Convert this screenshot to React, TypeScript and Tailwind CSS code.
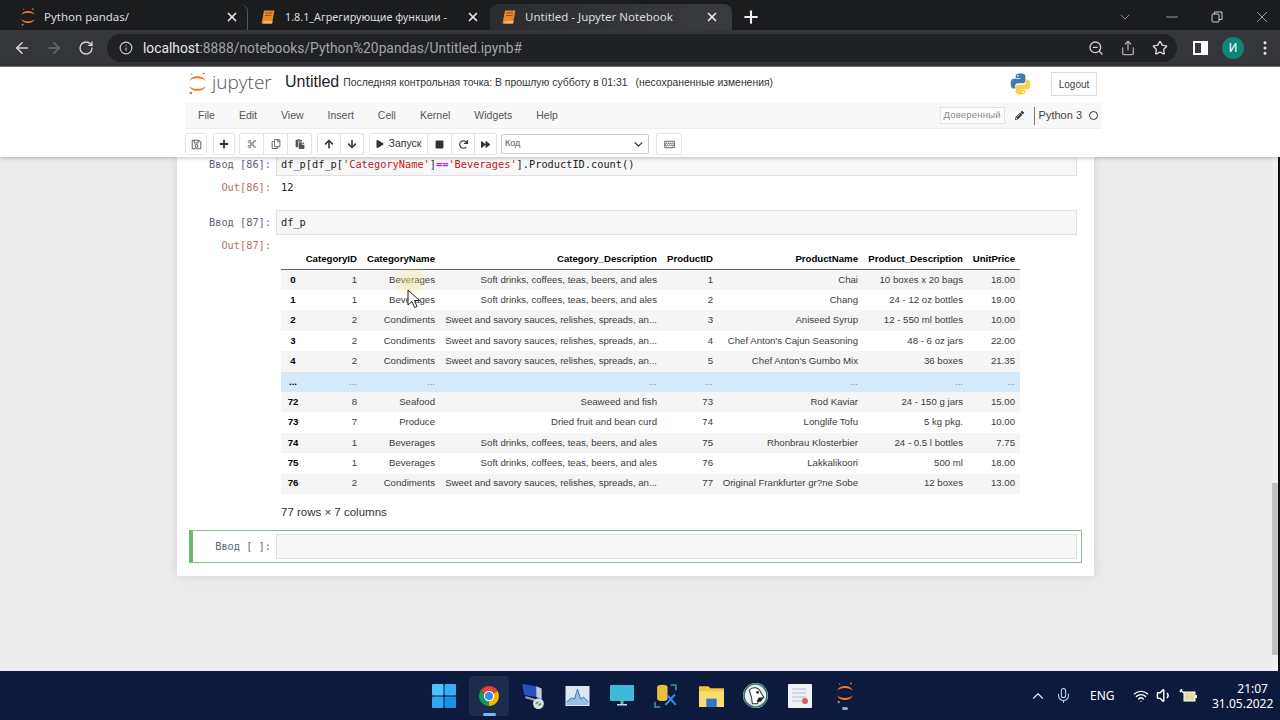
import React from "react";
import { ArrowLeft, ArrowRight, RotateCw, Info, ZoomOut, Star, ChevronDown, ChevronUp, Minus, X, Plus, Mic, Wifi, Volume1, MoreVertical, Share } from "lucide-react";
import { FaRegSave, FaPlus, FaCut, FaRegCopy, FaPaste, FaArrowUp, FaArrowDown, FaPlay, FaStop, FaRedo, FaForward, FaKeyboard, FaPencilAlt } from "react-icons/fa";

const Jup = ({ className }: { className: string }) => (
  <svg viewBox="0 0 20 26" className={className}>
    <path d="M1.5 10.5C3 3.5 17 3.5 18.5 10.5C15.5 6.5 4.5 6.5 1.5 10.5Z" fill="#f37726" />
    <path d="M1.5 15.5C3 22.5 17 22.5 18.5 15.5C15.5 19.5 4.5 19.5 1.5 15.5Z" fill="#f37726" />
    <circle cx="16.5" cy="2.5" r="1.1" fill="#8a8a8a" />
    <circle cx="3" cy="23" r="1.3" fill="#8a8a8a" />
    <circle cx="4" cy="3" r="0.8" fill="#8a8a8a" />
  </svg>
);

const Book = () => (
  <svg viewBox="0 0 16 16" className="w-4 h-4 shrink-0">
    <path d="M4 1.5H14.5L12 14.5H1.5Z" fill="#e8862c" />
    <path d="M4.2 12H12.6L12 14.5H2.6Z" fill="#f3b56e" />
    <path d="M5.5 4H12M5 6.5H11.5" stroke="#9a5412" strokeWidth="1" />
  </svg>
);

const Tab = ({ icon, title, className, titleClass = "text-[11.5px]" }: { icon: React.ReactNode; title: string; className: string; titleClass?: string }) => (
  <div className={`relative h-[26px] shrink-0 flex items-center rounded-t-lg ${className}`}>
    {icon}
    <span className={`flex-1 whitespace-nowrap overflow-hidden text-[#dcdde0] font-['Noto_Sans',sans-serif] ${titleClass}`}>{title}</span>
    <X size={14} strokeWidth={3} color="#e6e6e6" />
  </div>
);

const Btn = ({ children, className = "" }: { children: React.ReactNode; className?: string }) => (
  <div className={`h-5 flex items-center justify-center border-r border-[#e3e3e3] last:border-r-0 text-[#333] ${className}`}>{children}</div>
);
const Group = ({ children }: { children: React.ReactNode }) => (
  <div className="flex h-5 border border-[#e3e3e3] rounded-[2px] bg-white box-content -my-px">{children}</div>
);

const rows: string[][] = [
  ["0", "1", "Beverages", "Soft drinks, coffees, teas, beers, and ales", "1", "Chai", "10 boxes x 20 bags", "18.00"],
  ["1", "1", "Beverages", "Soft drinks, coffees, teas, beers, and ales", "2", "Chang", "24 - 12 oz bottles", "19.00"],
  ["2", "2", "Condiments", "Sweet and savory sauces, relishes, spreads, an...", "3", "Aniseed Syrup", "12 - 550 ml bottles", "10.00"],
  ["3", "2", "Condiments", "Sweet and savory sauces, relishes, spreads, an...", "4", "Chef Anton's Cajun Seasoning", "48 - 6 oz jars", "22.00"],
  ["4", "2", "Condiments", "Sweet and savory sauces, relishes, spreads, an...", "5", "Chef Anton's Gumbo Mix", "36 boxes", "21.35"],
  ["...", "...", "...", "...", "...", "...", "...", "..."],
  ["72", "8", "Seafood", "Seaweed and fish", "73", "Rod Kaviar", "24 - 150 g jars", "15.00"],
  ["73", "7", "Produce", "Dried fruit and bean curd", "74", "Longlife Tofu", "5 kg pkg.", "10.00"],
  ["74", "1", "Beverages", "Soft drinks, coffees, teas, beers, and ales", "75", "Rhonbrau Klosterbier", "24 - 0.5 l bottles", "7.75"],
  ["75", "1", "Beverages", "Soft drinks, coffees, teas, beers, and ales", "76", "Lakkalikoori", "500 ml", "18.00"],
  ["76", "2", "Condiments", "Sweet and savory sauces, relishes, spreads, an...", "77", "Original Frankfurter gr?ne Sobe", "12 boxes", "13.00"],
];
const heads = ["", "CategoryID", "CategoryName", "Category_Description", "ProductID", "ProductName", "Product_Description", "UnitPrice"];
const widths = ["w-[21px]", "w-[60px]", "w-[78px]", "w-[222px]", "w-[56px]", "w-[145px]", "w-[105px]", "w-[52px]"];

const mono = "font-['DejaVu_Sans_Mono',monospace] text-[10.3px]";
const Prompt = ({ children, out }: { children: React.ReactNode; out?: boolean }) => (
  <div className={`w-[83px] shrink-0 pr-[5px] text-right ${mono} ${out ? "text-[#b0745f]" : "text-[#5b6478]"}`}>{children}</div>
);

const Slot = ({ children, active }: { children: React.ReactNode; active?: boolean }) => (
  <div className={`relative w-[40px] h-[40px] flex items-center justify-center rounded ${active ? "bg-[#1d2c4d]" : ""}`}>
    {children}
    {active && <div className="absolute bottom-0 left-[14px] w-[13px] h-[3px] rounded bg-[#7cb8ee]" />}
  </div>
);

export default function App() {
  return (
    <div className="relative w-[1280px] h-[720px] overflow-hidden flex flex-col bg-[#ececec] font-['Liberation_Sans',sans-serif]">
      {/* tab strip */}
      <div className="h-[30px] shrink-0 bg-[#1b1c1e] flex items-end">
        <Tab className="w-[248px] pl-[20px] pr-[8px] border-r border-[#55565a]" icon={<Jup className="w-[16px] h-[20px] shrink-0 mr-[8px]" />} title="Python pandas/" />
        <Tab className="w-[242px] pl-[12px] pr-[10px] gap-[9px]" titleClass="text-[10.8px]" icon={<Book />} title="1.8.1_Агрегирующие функции -" />
        <Tab className="w-[242px] pl-[11px] pr-[13px] gap-[8px] bg-gradient-to-r from-[#2b2c2f] to-[#3a3b3e]" icon={<Book />} title="Untitled - Jupyter Notebook" />
        <Plus size={20} strokeWidth={2.5} color="#f0f0f0" className="ml-[9px] mb-[3px]" />
        <div className="ml-auto flex items-center mb-[4px] pr-[9px] gap-[30px] text-[#c9c9c9]">
          <ChevronDown size={16} strokeWidth={1} />
          <Minus size={18} strokeWidth={1} />
          <svg viewBox="0 0 12 12" className="w-[12px] h-[12px]" fill="none" stroke="#cfcfcf" strokeWidth="1"><rect x="1" y="3" width="7" height="8" rx="1" /><path d="M3.5 3V1H11V8.5H8" /></svg>
          <X size={18} strokeWidth={1} />
        </div>
      </div>
      {/* address */}
      <div className="h-[37px] shrink-0 bg-[#35363a] flex items-center pl-[13px] border-b border-[#77787a]">
        <ArrowLeft size={18} color="#d8d8d8" />
        <ArrowRight size={18} color="#6e6f72" className="ml-[14px]" />
        <RotateCw size={16} color="#d8d8d8" className="ml-[15px]" />
        <div className="ml-[13px] w-[1070px] h-[28px] rounded-full bg-[#202124] flex items-center pl-[12px] pr-[9px]">
          <Info size={14} color="#cfcfcf" />
          <span className="ml-[10px] text-[13.8px] font-['Roboto',sans-serif] text-[#e8e8e8]">localhost<span className="text-[#a3a5a8]">:8888/notebooks/Python%20pandas/Untitled.ipynb#</span></span>
          <div className="ml-auto flex items-center gap-[16px]">
            <ZoomOut size={16} color="#d0d0d0" />
            <Share size={16} color="#a8a8a8" />
            <Star size={16} color="#dcdcdc" />
          </div>
        </div>
        <div className="ml-[16px] w-[15px] h-[14px] bg-white border-r-[5px] border-[#fff] flex"><div className="w-[6px] ml-[2px] my-[2px] bg-[#35363a]" /></div>
        <div className="ml-[14px] w-[22px] h-[22px] rounded-full bg-[#0f8577] text-white text-[12px] flex items-center justify-center font-['Roboto',sans-serif]">И</div>
        <MoreVertical size={18} color="#e8e8e8" className="ml-[12px]" />
      </div>
      {/* jupyter header */}
      <div className="h-[90px] shrink-0 bg-white shadow-[0_1px_4px_rgba(0,0,0,0.25)] z-10 pl-[185px]">
        <div className="h-[36px] w-[912px] flex items-start">
          <Jup className="w-[19px] h-[25px] ml-[3px] mt-[4px]" />
          <span className="ml-[5px] mt-[1px] w-[60px] text-[19px] leading-[28px] text-[#555] font-['Open_Sans',sans-serif] font-light">jupyter</span>
          <span className="ml-[13px] mt-[4px] text-[16px] leading-[22px] text-[#222]">Untitled</span>
          <span className="ml-[4px] mt-[9px] text-[10.4px] leading-[14px] text-[#333]">Последняя контрольная точка: В прошлую субботу в 01:31</span>
          <span className="ml-[8px] mt-[9px] text-[10.4px] leading-[14px] text-[#333]">(несохраненные изменения)</span>
          <svg viewBox="0 0 24 24" className="ml-auto mt-[5px] w-[23px] h-[24px]">
            <path d="M11.9 1C6.7 1 7 3.3 7 3.3V5.7h5v.8H5.1S1.7 6.1 1.7 11.5s3 5.2 3 5.2h1.8v-2.5s-.1-3 2.9-3h4.9s2.8 0 2.8-2.7V3.9S17.6 1 11.9 1Z" fill="#3c7cb0" />
            <path d="M12.1 23c5.2 0 4.9-2.3 4.9-2.3v-2.4h-5v-.8h6.9s3.4.4 3.4-5-3-5.2-3-5.2h-1.8v2.5s.1 3-2.9 3H9.700s-2.800 0-2.800 2.700v4.500S6.400 23 12.100 23Z" fill="#f7d04b" />
            <circle cx="9.200" cy="3.500" r=".9" fill="#fff" /><circle cx="14.800" cy="20.500" r=".9" fill="#fff" />
          </svg>
          <div className="ml-[19px] mt-[5px] w-[46px] h-[24px] border border-[#ddd] flex items-center justify-center text-[10px] text-[#444]">Logout</div>
        </div>
        <div className="h-[26px] w-[917px] bg-[#f8f8f8] border-b border-[#eee] flex items-center pl-[13px] text-[10.5px] text-[#555] gap-[24px]">
          <span>File</span><span>Edit</span><span>View</span><span>Insert</span><span>Cell</span><span>Kernel</span><span>Widgets</span><span>Help</span>
          <div className="ml-auto flex items-center">
            <div className="w-[65px] h-[17px] border border-[#e4e4e4] bg-white flex items-center justify-center text-[9.500px] text-[#888] tracking-[0.2px]">Доверенный</div>
            <FaPencilAlt size={9} color="#333" className="ml-[10px]" />
            <div className="ml-[10px] w-px h-[18px] bg-[#777]" />
            <span className="ml-[4px] text-[11px] text-[#444]">Python 3</span>
            <div className="ml-[7px] mr-[4px] w-[9px] h-[9px] rounded-full border-[1.500px] border-[#333]" />
          </div>
        </div>
        <div className="mt-[5px] flex items-center h-[20px]">
          <Group><Btn className="w-[20px]"><FaRegSave size={11} color="#666" /></Btn></Group>
          <div className="ml-[6px]"><Group><Btn className="w-[20px]"><FaPlus size={10} /></Btn></Group></div>
          <div className="ml-[4px]"><Group>
            <Btn className="w-[24px]"><FaCut size={10} color="#999" /></Btn>
            <Btn className="w-[24px]"><FaRegCopy size={10} color="#666" /></Btn>
            <Btn className="w-[23px]"><FaPaste size={10} color="#555" /></Btn>
          </Group></div>
          <div className="ml-[5px]"><Group>
            <Btn className="w-[23px]"><FaArrowUp size={10} /></Btn>
            <Btn className="w-[22px]"><FaArrowDown size={10} /></Btn>
          </Group></div>
          <div className="ml-[5px]"><Group>
            <Btn className="w-[58px] gap-[5px] text-[10.500px]"><FaPlay size={8} /><span>Запуск</span></Btn>
            <Btn className="w-[24px]"><FaStop size={9} /></Btn>
            <Btn className="w-[23px]"><FaRedo size={9} /></Btn>
            <Btn className="w-[21px]"><FaForward size={9} /></Btn>
          </Group></div>
          <div className="ml-[4px] w-[148px] h-[20px] border border-[#ccc] rounded-[2px] flex items-center pl-[3px] pr-[3px] text-[9px] text-[#555]">
            <span>Код</span><ChevronDown size={13} strokeWidth={2.5} color="#333" className="ml-auto" />
          </div>
          <div className="ml-[7px]"><Group><Btn className="w-[24px]"><FaKeyboard size={11} color="#888" /></Btn></Group></div>
        </div>
      </div>
      {/* notebook */}
      <div className="flex-1 flex min-h-0">
        <div className="flex-1 pl-[177px]">
          <div className="w-[917px] h-[419px] bg-white shadow-[0_0_10px_rgba(0,0,0,0.12)] pl-[12px]">
            <div className="flex h-[19px] items-start pl-[4px]">
              <Prompt>Ввод [86]:</Prompt>
              <div className={`w-[801px] h-[19px] bg-[#f7f7f7] border border-t-0 border-[#e0e0e0] pl-[4px] ${mono} text-[#222]`}>
                <span>df_p[df_p[<span className="text-[#ba2121]">'CategoryName'</span>]<span className="text-[#aa22ff] font-bold">==</span><span className="text-[#ba2121]">'Beverages'</span>].ProductID.count()</span>
              </div>
            </div>
            <div className="flex mt-[4px] h-[15px] items-center pl-[4px]">
              <Prompt out>Out[86]:</Prompt>
              <div className={`pl-[5px] ${mono} text-[#222]`}>12</div>
            </div>
            <div className="flex mt-[15px] h-[25px] items-center pl-[4px]">
              <Prompt>Ввод [87]:</Prompt>
              <div className={`w-[801px] h-[25px] bg-[#f7f7f7] border border-[#e0e0e0] pl-[4px] flex items-center ${mono} text-[#222]`}>df_p</div>
            </div>
            <div className="flex pl-[4px] mt-[4px]">
              <div className="-mt-px"><Prompt out>Out[87]:</Prompt></div>
              <div className="pl-[5px] pt-[10px]">
                <table className="w-[739px] table-fixed border-collapse text-[9.65px] text-[#3c3c3c]">
                  <thead>
                    <tr className="h-[20px] border-b border-[#666]">
                      {heads.map((h, i) => <th key={i} className={`${widths[i]} pr-[5px] text-right font-bold text-black`}>{h}</th>)}
                    </tr>
                  </thead>
                  <tbody>
                    {rows.map((r, i) => (
                      <tr key={i} className={`${i === 0 ? "h-[21px]" : "h-[20.400px]"} ${i === 5 ? "bg-[#d4e9f9]" : i % 2 === 0 ? "bg-[#f5f5f5]" : "bg-white"}`}>
                        {r.map((c, j) => (
                          <td key={j} className={`whitespace-nowrap ${j === 0 ? "text-center pl-[3px] font-bold text-black" : "pr-[5px] text-right"} ${i === 5 && j > 0 ? "text-[#888]" : ""}`}>{c}</td>
                        ))}
                      </tr>
                    ))}
                  </tbody>
                </table>
                <div className="mt-[11px] h-[14px] text-[11.500px] leading-[14px] text-[#333]">77 rows × 7 columns</div>
              </div>
            </div>
            <div className="mt-[11px] w-[893px] h-[33px] border border-[#8db890] border-l-[4px] border-l-[#66bb6a] flex items-center">
              <Prompt>Ввод [ ]:</Prompt>
              <div className="w-[801px] h-[25px] bg-[#f7f7f7] border border-[#e0e0e0]" />
            </div>
          </div>
        </div>
        <div className="w-[8px] bg-[#f1f1f1] pt-[326px] border-r-2 border-[#111]"><div className="h-[172px] bg-[#c0c0c0]" /></div>
      </div>
      {/* taskbar */}
      <div className="h-[49px] shrink-0 bg-[#0c1b3d] flex items-center pl-[424px] gap-[4.500px]">
        <Slot>
          <svg viewBox="0 0 24 24" className="w-[24px] h-[24px]"><rect x="0" y="0" width="11.500" height="11.500" rx="1" fill="#4cc2ff" /><rect x="12.500" y="0" width="11.500" height="11.500" rx="1" fill="#35b0f5" /><rect x="0" y="12.500" width="11.500" height="11.500" rx="1" fill="#2fa8f0" /><rect x="12.500" y="12.500" width="11.500" height="11.500" rx="1" fill="#1c92e4" /></svg>
        </Slot>
        <Slot active>
          <svg viewBox="0 0 24 24" className="w-[24px] h-[24px]"><path d="M12 12L3.340 7A10 10 0 0 1 20.660 7Z" fill="#db4437" /><path d="M12 12L20.660 7A10 10 0 0 1 12 22Z" fill="#f4b400" /><path d="M12 12L12 22A10 10 0 0 1 3.340 7Z" fill="#0f9d58" /><circle cx="12" cy="12" r="5.200" fill="#fff" /><circle cx="12" cy="12" r="4" fill="#4285f4" /></svg>
        </Slot>
        <Slot>
          <svg viewBox="0 0 24 24" className="w-[26px] h-[26px]"><path d="M2 1L15 3V13L4 11Z" fill="#2b4fc0" /><path d="M15 3L20 5V15L15 13Z" fill="#c5cbd8" /><path d="M5 12L18 16V18L5 14Z" fill="#9aa3b5" /><circle cx="17" cy="19" r="5" fill="#d9dde2" /><path d="M14.500 19L17 17.500M19.500 19L17 20.500" stroke="#3aa83a" strokeWidth="1.500" /></svg>
        </Slot>
        <Slot>
          <svg viewBox="0 0 24 20" className="w-[25px] h-[20px]"><rect width="24" height="20" fill="#dbe7f3" /><path d="M1 16L6 12L9 13L12 3L15 13L18 11L23 16V19H1Z" fill="#9dbfe0" /><path d="M1 16L6 12L9 13L12 3L15 13L18 11L23 16" fill="none" stroke="#3c78b8" /></svg>
        </Slot>
        <Slot>
          <svg viewBox="0 0 24 22" className="w-[24px] h-[22px]"><rect width="24" height="16" rx="1" fill="#3dbbd8" /><rect x="10.500" y="16" width="3" height="3" fill="#8aa" /><rect x="7" y="19" width="10" height="1.500" fill="#cde" /></svg>
        </Slot>
        <Slot>
          <svg viewBox="0 0 24 24" className="w-[25px] h-[25px]"><path d="M3 4C3 1 13 1 13 4V15C13 18 3 18 3 15Z" fill="#e9bf3e" /><path d="M16 2H21V7M1 18V23H6" fill="none" stroke="#3f9e7c" strokeWidth="1.500" /><path d="M11 21L20 11M13 12L21 21" stroke="#2f8fe0" strokeWidth="2" /></svg>
        </Slot>
        <Slot>
          <svg viewBox="0 0 24 22" className="w-[25px] h-[23px]"><path d="M0 2H9L11 4H24V22H0Z" fill="#f2c63f" /><path d="M0 7H24V22H0Z" fill="#fbdc6e" /><rect x="7" y="14" width="10" height="8" fill="#2b78c8" /></svg>
        </Slot>
        <Slot>
          <svg viewBox="0 0 24 24" className="w-[25px] h-[25px]"><circle cx="12" cy="12" r="12" fill="#e8f0ee" /><circle cx="12" cy="12" r="11" fill="none" stroke="#2b6f6a" strokeWidth="1.500" /><path d="M6 7C9 3 15 4 17 9L20 14C17 16 16 15 15 16L14 20H9L8 13Z" fill="#fff" stroke="#333" strokeWidth="1" /><circle cx="14" cy="9" r="1.300" fill="#222" /><path d="M15 14L20 14L17 18L13 18Z" fill="#222" /></svg>
        </Slot>
        <Slot>
          <svg viewBox="0 0 24 24" className="w-[24px] h-[24px]"><rect width="24" height="24" rx="1" fill="#eef2f6" /><path d="M4 5H18M4 9H18M4 13H18M4 17H14" stroke="#b4bcc6" strokeWidth="1" /><circle cx="17" cy="17" r="3" fill="#e05a5a" /></svg>
        </Slot>
        <Slot>
          <div className="relative flex flex-col items-center">
            <Jup className="w-[18px] h-[24px]" />
            <div className="w-[6px] h-[3px] rounded bg-[#9fa8b8] mt-[2px]" />
          </div>
        </Slot>
        <div className="ml-auto flex items-center pr-[12px] text-white">
          <ChevronUp size={18} strokeWidth={1.500} color="#e8e8e8" />
          <Mic size={17} strokeWidth={1.500} color="#b8d4f0" className="ml-[8px]" />
          <span className="ml-[18px] w-[26px] text-[12px] font-['Noto_Sans',sans-serif]">ENG</span>
          <Wifi size={16} color="#fff" className="ml-[17px]" />
          <Volume1 size={17} color="#fff" className="ml-[7px]" />
          <svg viewBox="0 0 18 14" className="ml-[6px] w-[18px] h-[14px]" fill="none"><rect x="5" y="3" width="11" height="9" fill="#e8d9a0" stroke="#fff" /><rect x="16" y="6" width="2" height="3" fill="#fff" /><path d="M1 1L5 4M3 0L1 3" stroke="#fff" strokeWidth="1.500" /></svg>
          <div className="ml-[15px] w-[56px] text-right text-[12px] leading-[15px] font-['Noto_Sans',sans-serif]">
            <div>21:07</div>
            <div>31.05.2022</div>
          </div>
        </div>
      </div>
      {/* pointer highlight and cursor */}
      <div className="absolute left-[392px] top-[264px] w-[36px] h-[36px] rounded-full bg-[radial-gradient(circle,rgba(250,225,130,0.55)_0%,rgba(250,225,130,0)_70%)] pointer-events-none" />
      <svg viewBox="0 0 14 20" className="absolute left-[407px] top-[289px] w-[14px] h-[20px]"><path d="M1 1V16L5 12.500L7.500 18.500L10 17.500L7.500 11.500L12.500 11.500Z" fill="#fff" stroke="#222" strokeWidth="1" /></svg>
    </div>
  );
}
